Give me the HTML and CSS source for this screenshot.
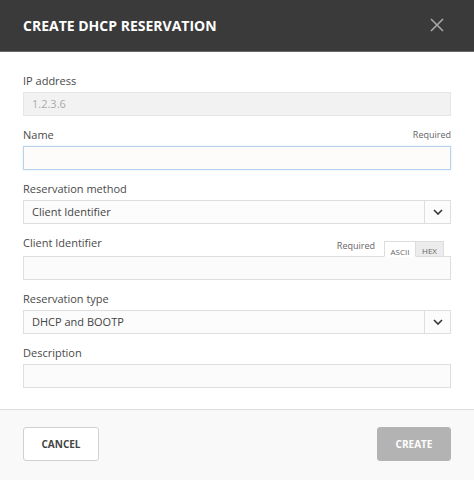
FILE: index.html
```html
<!DOCTYPE html>
<html>
<head>
<meta charset="utf-8">
<link rel="stylesheet" href="styles.css">
</head>
<body>
<div class="dialog">
  <div class="header">
    <div class="title">CREATE DHCP RESERVATION</div>
    <svg class="close" width="14" height="14" viewBox="0 0 14 14"><path d="M1 1 L13 13 M13 1 L1 13" stroke="#a8a8a8" stroke-width="1.6" fill="none"/></svg>
  </div>
  <div class="content">
    <div class="field">
      <div class="label-row"><span class="label">IP address</span></div>
      <div class="input disabled">1.2.3.6</div>
    </div>
    <div class="field">
      <div class="label-row"><span class="label">Name</span><span class="req">Required</span></div>
      <div class="input focused"></div>
    </div>
    <div class="field">
      <div class="label-row"><span class="label">Reservation method</span></div>
      <div class="select"><span class="sel-text">Client Identifier</span><span class="sel-btn"><svg width="10" height="6" viewBox="0 0 10 6"><path d="M1 1 L5 5 L9 1" stroke="#333" stroke-width="1.6" fill="none"/></svg></span></div>
    </div>
    <div class="field">
      <div class="label-row tall"><span class="label">Client Identifier</span>
        <div class="right">
          <span class="req">Required</span>
          <div class="tabs"><span class="tab active">ASCII</span><span class="tab hex">HEX</span></div>
        </div>
      </div>
      <div class="input"></div>
    </div>
    <div class="field">
      <div class="label-row"><span class="label">Reservation type</span></div>
      <div class="select"><span class="sel-text">DHCP and BOOTP</span><span class="sel-btn"><svg width="10" height="6" viewBox="0 0 10 6"><path d="M1 1 L5 5 L9 1" stroke="#333" stroke-width="1.6" fill="none"/></svg></span></div>
    </div>
    <div class="field">
      <div class="label-row"><span class="label">Description</span></div>
      <div class="input"></div>
    </div>
  </div>
  <div class="footer">
    <button class="btn cancel">CANCEL</button>
    <button class="btn create">CREATE</button>
  </div>
</div>
</body>
</html>
```
FILE: styles.css
```css
* { box-sizing: border-box; }
html, body { margin: 0; padding: 0; background: #fff; }
body { font-family: "Open Sans", "Liberation Sans", sans-serif; }
.dialog { width: 474px; height: 480px; display: flex; flex-direction: column; }
.header {
  height: 52px; background: #3a3a3a; border-bottom: 1px solid #6a6a6a;
  display: flex; align-items: center; justify-content: space-between;
  padding: 0 23px 1px 23px;
}
.title { color: #fff; font-size: 14px; font-weight: 700; letter-spacing: 0; }
.close { margin-right: 7px; }
.content { padding: 21px 23px 21px 23px; display: flex; flex-direction: column; gap: 11px; }
.field { display: flex; flex-direction: column; }
.label-row { height: 16px; margin-bottom: 3px; display: flex; justify-content: space-between; align-items: center; }
.label-row.tall { height: 21px; margin-bottom: 0; align-items: flex-start; }
.label { font-size: 11px; color: #4a4a4a; line-height: 16px; }
.req { font-size: 9px; color: #666; line-height: 16px; }
.right { display: flex; align-items: flex-end; height: 21px; }
.right .req { margin-right: 9px; line-height: 14px; align-self: flex-start; margin-top: 4px; }
.tabs { display: flex; margin-bottom: -1px; margin-right: 7px; position: relative; z-index: 1; }
.tab {
  font-size: 8px; color: #666; width: 32px; height: 16px; line-height: 17px; text-align: center;
  background: #ececec; border: 1px solid #ddd; border-left: none; border-bottom: 1px solid #ddd;
}
.tab.hex { width: 28px; }
.tab.active { background: #fff; border-left: 1px solid #ddd; border-bottom-color: #fff; padding-top: 1px; }
.input {
  height: 24px; border: 1px solid #dedede; background: #fbfbfb;
  font-size: 11px; color: #555; line-height: 22px; padding: 0 8px;
}
.input.disabled { background: #f2f2f2; color: #aaa; border-color: #e6e6e6; }
.input.focused { border-color: #b7d4ee; background: #fdfcfa; box-shadow: 0 0 2px rgba(140,180,220,0.35); }
.select {
  height: 24px; border: 1px solid #dedede; background: #fcfcfc;
  display: flex; align-items: stretch;
}
.sel-text { flex: 1; font-size: 11px; color: #444; line-height: 22px; padding: 0 8px; }
.sel-btn { width: 26px; border-left: 1px solid #dedede; display: flex; align-items: center; justify-content: center; }
.footer {
  flex: 1; background: #f9f9f9; border-top: 1px solid #dcdcdc;
  display: flex; justify-content: space-between; align-items: flex-start;
  padding: 17px 23px 0 23px;
}
.btn {
  height: 34px; font-family: "Open Sans", "Liberation Sans", sans-serif;
  font-size: 10px; font-weight: 700; border-radius: 3px; cursor: pointer;
}
.cancel { width: 76px; background: #fff; border: 1px solid #d0d0d0; color: #444; }
.create { width: 74px; background: #b3b3b3; border: 1px solid #b3b3b3; color: #fff; }
```
